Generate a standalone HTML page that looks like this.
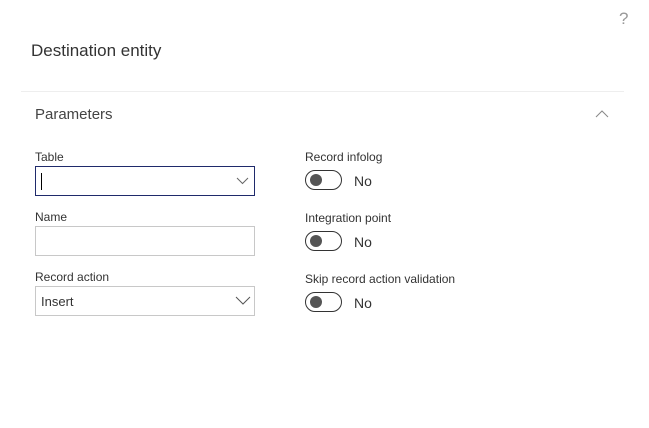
<html><head><style>
body{margin:0;width:649px;height:428px;background:#fff;font-family:"Liberation Sans",sans-serif;position:relative;overflow:hidden;color:#333}
.a{position:absolute}
.lbl{font-size:12px;color:#333}
.in{position:absolute;left:35px;width:218px;height:28px;border:1px solid #c8c8c8;box-sizing:content-box}
.tg{position:absolute;left:305px;width:35px;height:18px;border:1px solid #333;border-radius:10px}
.tg:after{content:"";position:absolute;left:4px;top:3px;width:12px;height:12px;border-radius:50%;background:#555}
.no{position:absolute;left:354px;font-size:14px;color:#333}
</style></head><body>
<div class="a" style="left:619px;top:9px;font-size:17px;color:#999;font-weight:300">?</div>
<div class="a" style="left:31px;top:41px;font-size:17px;color:#333">Destination entity</div>
<div class="a" style="left:21px;top:91px;width:603px;height:1px;background:#eee"></div>
<div class="a" style="left:35px;top:106px;font-size:15px;color:#444">Parameters</div>
<svg class="a" style="left:595px;top:110px" width="14" height="9"><path d="M1 7L7 1L13 7" fill="none" stroke="#888" stroke-width="1"/></svg>

<div class="a lbl" style="left:35px;top:150px">Table</div>
<div class="in" style="top:166px;border-color:#1f2a6b"></div>
<div class="a" style="left:41px;top:173px;width:1px;height:17px;background:#000"></div>
<svg class="a" style="left:236px;top:177px" width="13" height="8"><path d="M1 1L6.5 6.5L12 1" fill="none" stroke="#666" stroke-width="1"/></svg>

<div class="a lbl" style="left:35px;top:210px">Name</div>
<div class="in" style="top:226px"></div>

<div class="a lbl" style="left:35px;top:270px">Record action</div>
<div class="in" style="top:286px"></div>
<div class="a" style="left:41px;top:294px;font-size:13px;color:#333">Insert</div>
<svg class="a" style="left:235px;top:296px" width="16" height="9"><path d="M1 1L8 8L15 1" fill="none" stroke="#555" stroke-width="1"/></svg>

<div class="a lbl" style="left:305px;top:150px">Record infolog</div>
<div class="tg" style="top:170px"></div><div class="no" style="top:173px">No</div>
<div class="a lbl" style="left:305px;top:211px">Integration point</div>
<div class="tg" style="top:231px"></div><div class="no" style="top:234px">No</div>
<div class="a lbl" style="left:305px;top:272px">Skip record action validation</div>
<div class="tg" style="top:292px"></div><div class="no" style="top:295px">No</div>
</body></html>
